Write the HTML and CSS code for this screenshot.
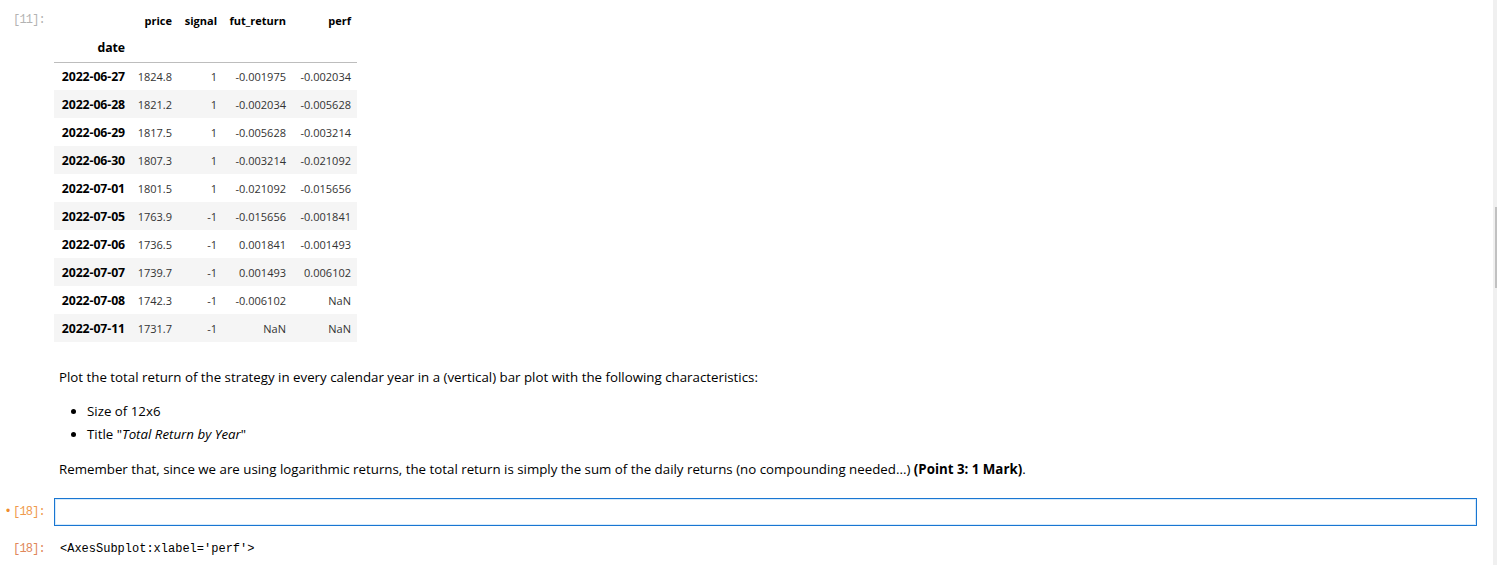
FILE: index.html
```html
<!DOCTYPE html>
<html>
<head>
<meta charset="utf-8">
<link rel="stylesheet" href="styles.css">
</head>
<body>
<div class="page">
  <div class="notebook">
    <div class="cell">
      <div class="prompt out-gray">[11]:</div>
      <div class="cell-body">
        <table class="df">
          <colgroup>
            <col class="c0"><col class="c1"><col class="c2"><col class="c3"><col class="c4">
          </colgroup>
          <thead>
            <tr><th></th><th>price</th><th>signal</th><th>fut_return</th><th>perf</th></tr>
            <tr class="idx-head"><th class="idx">date</th><th></th><th></th><th></th><th></th></tr>
          </thead>
          <tbody>
            <tr><th>2022-06-27</th><td>1824.8</td><td>1</td><td>-0.001975</td><td>-0.002034</td></tr>
            <tr><th>2022-06-28</th><td>1821.2</td><td>1</td><td>-0.002034</td><td>-0.005628</td></tr>
            <tr><th>2022-06-29</th><td>1817.5</td><td>1</td><td>-0.005628</td><td>-0.003214</td></tr>
            <tr><th>2022-06-30</th><td>1807.3</td><td>1</td><td>-0.003214</td><td>-0.021092</td></tr>
            <tr><th>2022-07-01</th><td>1801.5</td><td>1</td><td>-0.021092</td><td>-0.015656</td></tr>
            <tr><th>2022-07-05</th><td>1763.9</td><td>-1</td><td>-0.015656</td><td>-0.001841</td></tr>
            <tr><th>2022-07-06</th><td>1736.5</td><td>-1</td><td>0.001841</td><td>-0.001493</td></tr>
            <tr><th>2022-07-07</th><td>1739.7</td><td>-1</td><td>0.001493</td><td>0.006102</td></tr>
            <tr><th>2022-07-08</th><td>1742.3</td><td>-1</td><td>-0.006102</td><td>NaN</td></tr>
            <tr><th>2022-07-11</th><td>1731.7</td><td>-1</td><td>NaN</td><td>NaN</td></tr>
          </tbody>
        </table>
      </div>
    </div>

    <div class="cell md">
      <div class="prompt"></div>
      <div class="cell-body markdown">
        <p>Plot the total return of the strategy in every calendar year in a (vertical) bar plot with the following characteristics:</p>
        <ul>
          <li>Size of 12x6</li>
          <li>Title "<em>Total Return by Year</em>"</li>
        </ul>
        <p>Remember that, since we are using logarithmic returns, the total return is simply the sum of the daily returns (no compounding needed...) <strong>(Point 3: 1 Mark)</strong>.</p>
      </div>
    </div>

    <div class="cell input-cell">
      <div class="prompt in-orange"><span class="dot">•</span>[18]:</div>
      <div class="cell-body"><div class="editor"></div></div>
    </div>

    <div class="cell output-cell">
      <div class="prompt out-orange">[18]:</div>
      <div class="cell-body"><pre class="out">&lt;AxesSubplot:xlabel='perf'&gt;</pre></div>
    </div>
  </div>
  <div class="scrollbar"><div class="thumb"></div></div>
</div>
</body>
</html>
```

FILE: styles.css
```css
html, body {
  margin: 0;
  padding: 0;
  background: #fff;
  overflow: hidden;
}
.page {
  display: flex;
  width: 1497px;
  height: 565px;
}
.notebook {
  flex: 1;
  padding-top: 6px;
  padding-right: 16px;
}
.scrollbar {
  width: 4px;
  background: #f0f0f0;
  position: relative;
}
.thumb {
  position: absolute;
  left: 2px;
  width: 2px;
  top: 207px;
  height: 81px;
  background: #c1c1c1;
}
.cell {
  display: flex;
}
.prompt {
  width: 54px;
  flex: none;
  box-sizing: border-box;
  padding-right: 9px;
  text-align: right;
  font-family: "Liberation Mono", monospace;
  font-size: 12px;
  letter-spacing: -0.8px;
  line-height: 28px;
}
.out-gray { color: #b3b3b3; }
.in-orange { color: #ef9a4c; }
.out-orange { color: #e0875a; }
.dot { color: #ef8d2c; margin-right: 2px; }
.cell-body {
  flex: 1;
  min-width: 0;
}

/* dataframe */
.df {
  border-collapse: collapse;
  font-family: "Open Sans", sans-serif;
  font-size: 11px;
  color: #222;
  table-layout: fixed;
  width: 303px;
}
.c0 { width: 77px; }
.c1 { width: 47px; }
.c2 { width: 45px; }
.c3 { width: 69px; }
.c4 { width: 65px; }
.df th, .df td {
  height: 28px;
  padding: 0 6px;
  text-align: right;
  white-space: nowrap;
  box-sizing: border-box;
}
.df th { font-weight: 700; color: #000; }
.df tbody th, .df th.idx { font-size: 12.3px; letter-spacing: -0.1px; }
.df td { color: #333; }
.df thead tr.idx-head th { border-bottom: 1px solid #bdbdbd; }
.df tbody tr:nth-child(even) { background: #f5f5f5; }

/* markdown */
.markdown {
  padding: 24px 0 0 5px;
  font-family: "Open Sans", sans-serif;
  font-size: 13.3px;
  color: #000;
}
.markdown p { margin: 0; line-height: 22px; }
.markdown ul { margin: 12px 0 13px 0; padding-left: 28px; }
.markdown li { line-height: 22px; margin-bottom: 1px; }

.input-cell { margin-top: 18px; }
.input-cell .prompt { line-height: 29px; }
.editor {
  height: 28px;
  box-sizing: border-box;
  border: 1px solid #1976d2;
  box-shadow: inset 0 0 0 1px #d7ebfb;
  background: #fff;
}
.output-cell { margin-top: 8px; }
.out {
  margin: 0;
  padding-left: 6px;
  font-family: "Liberation Mono", monospace;
  font-size: 12px;
  line-height: 28px;
  color: #000;
}
```
